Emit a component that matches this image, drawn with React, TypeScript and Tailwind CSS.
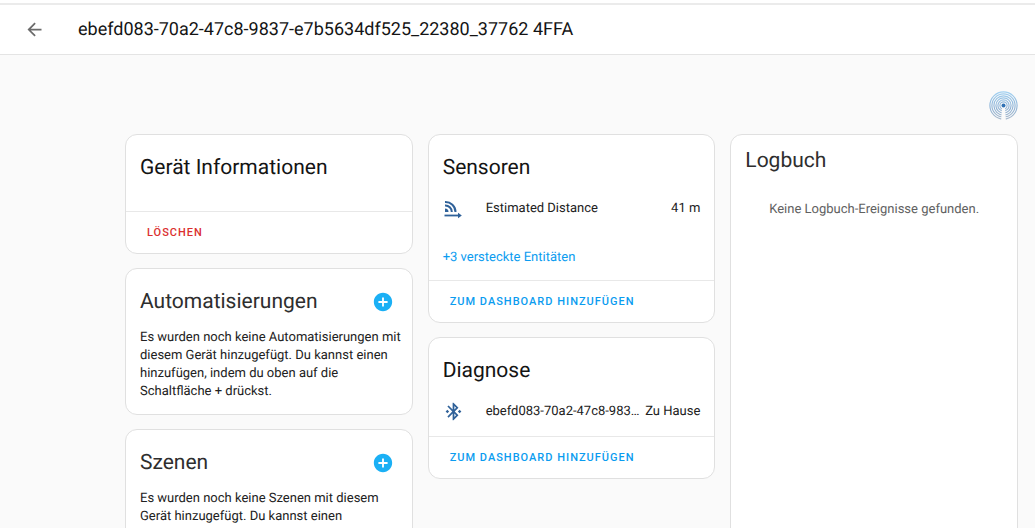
import React from "react";
import { MdAddCircle, MdArrowBack, MdBluetoothConnected } from "react-icons/md";

const Card = ({ children, className = "" }: { children: React.ReactNode; className?: string }) => (
  <section className={`rounded-xl border border-[#e0e0e0] bg-white ${className}`}>{children}</section>
);

const CardTitle = ({ children }: { children: React.ReactNode }) => (
  <h2 className="px-3.5 pt-[15px] text-[21px] leading-9 text-[#141414]">{children}</h2>
);

const CardFooter = ({ label, danger = false }: { label: string; danger?: boolean }) => (
  <div className="flex h-[42px] items-center border-t border-[#e8e8e8] px-3.5">
    <button
      type="button"
      className={`px-[7px] text-[11px] font-medium tracking-[1px] uppercase ${danger ? "text-[#db3030]" : "text-[#0b9cf0]"}`}
    >
      {label}
    </button>
  </div>
);

const EntityRow = ({ icon, name, state }: { icon: React.ReactNode; name: string; state: string }) => (
  <div className="flex h-[45px] items-center px-3.5">
    <span className="w-[43px] shrink-0 text-[#2f6199]">{icon}</span>
    <span className="min-w-0 flex-1 whitespace-nowrap">{name}</span>
    <span className="ml-2 shrink-0">{state}</span>
  </div>
);

const AddCard = ({ title, text, className }: { title: string; text: string; className?: string }) => (
  <Card className={className}>
    <div className="flex items-center justify-between px-3.5 pt-[15px]">
      <h2 className="text-[21px] leading-9 text-[#2e2e2e]">{title}</h2>
      <button type="button" aria-label={`${title} hinzufügen`} className="mr-1 text-[#1bb0f5]">
        <MdAddCircle size={22} />
      </button>
    </div>
    <p className="mt-[9px] pr-2 pb-[13px] pl-3.5">{text}</p>
  </Card>
);

const DistanceIcon = () => (
  <svg width="22" height="22" viewBox="0 0 22 22" fill="none" stroke="currentColor" strokeWidth="2">
    <path d="M2 4A10 10 0 0 1 12.5 14M2 7.5A6.5 6.5 0 0 1 8.8 14" />
    <path d="M2 10.5A3.5 3.5 0 0 1 5.5 14H2Z" fill="currentColor" stroke="none" />
    <path d="M1.5 17.5H16" strokeWidth="1.8" />
    <path d="M15 14.8L18.8 17.5L15 20.2Z" fill="currentColor" stroke="none" />
  </svg>
);

const BeaconLogo = () => (
  <svg width="29" height="29" viewBox="0 0 29 29" fill="none">
    <defs>
      <linearGradient id="rings" gradientUnits="userSpaceOnUse" x1="14" y1="0" x2="14" y2="29">
        <stop offset="0" stopColor="#a3d3f3" />
        <stop offset="0.55" stopColor="#8db2d6" />
        <stop offset="1" stopColor="#a9b9ca" />
      </linearGradient>
    </defs>
    <g stroke="url(#rings)" strokeWidth="1.1">
      <circle cx="14.5" cy="14.5" r="13.6" />
      <circle cx="14.5" cy="14.5" r="11.6" />
      <circle cx="14.5" cy="14.5" r="9.6" />
      <circle cx="14.5" cy="14.5" r="7.6" />
      <circle cx="14.5" cy="14.5" r="5.6" />
      <circle cx="14.5" cy="14.5" r="3.6" />
    </g>
    <path d="M13 15.5H16L16.8 29H12.2Z" fill="#fafafa" />
    <circle cx="14.5" cy="14.5" r="2" fill="#2f72b5" />
  </svg>
);

const DevicePage = () => {
  return (
    <div className="flex h-screen flex-col overflow-hidden bg-[#fafafa] font-[Roboto,sans-serif] text-[13px] leading-[18px] text-[#212121] [text-rendering:geometricPrecision]">
      <div className="h-[3px] shrink-0 bg-white" />
      <header className="flex h-[52px] shrink-0 items-center border-t-2 border-b border-t-[#ebebeb] border-b-[#e4e4e4] bg-white px-6">
        <button type="button" aria-label="Zurück" className="mr-[33px] text-[#6b6b6b]">
          <MdArrowBack size={21} />
        </button>
        <h1 className="text-lg text-[#141414]">ebefd083-70a2-47c8-9837-e7b5634df525_22380_37762 4FFA</h1>
      </header>

      <main className="min-h-0 flex-1 pr-[17px] pl-[125px]">
        <div className="flex justify-end pt-9 pb-3.5">
          <BeaconLogo />
        </div>
        <div className="grid grid-cols-3 gap-[15px]">
          <div className="flex flex-col gap-3.5">
            <Card>
              <CardTitle>Gerät Informationen</CardTitle>
              <div className="h-[25px]" />
              <CardFooter label="Löschen" danger />
            </Card>
            <AddCard
              title="Automatisierungen"
              text="Es wurden noch keine Automatisierungen mit diesem Gerät hinzugefügt. Du kannst einen hinzufügen, indem du oben auf die Schaltfläche + drückst."
            />
            <AddCard
              title="Szenen"
              text="Es wurden noch keine Szenen mit diesem Gerät hinzugefügt. Du kannst einen"
              className="min-h-36"
            />
          </div>

          <div className="flex flex-col gap-3.5">
            <Card>
              <CardTitle>Sensoren</CardTitle>
              <EntityRow icon={<DistanceIcon />} name="Estimated Distance" state="41 m" />
              <a href="#entities" className="mt-[18px] block px-3.5 pb-[13px] text-[#0b9cf0]">
                +3 versteckte Entitäten
              </a>
              <CardFooter label="Zum Dashboard hinzufügen" />
            </Card>
            <Card>
              <CardTitle>Diagnose</CardTitle>
              <EntityRow icon={<MdBluetoothConnected size={21} />} name="ebefd083-70a2-47c8-983…" state="Zu Hause" />
              <div className="h-0.5" />
              <CardFooter label="Zum Dashboard hinzufügen" />
            </Card>
          </div>

          <Card>
            <h2 className="px-3.5 pt-2 text-[21px] leading-9 text-[#2e2e2e]">Logbuch</h2>
            <p className="mt-[22px] text-center text-[#616161]">Keine Logbuch-Ereignisse gefunden.</p>
          </Card>
        </div>
      </main>
    </div>
  );
};

export default DevicePage;
